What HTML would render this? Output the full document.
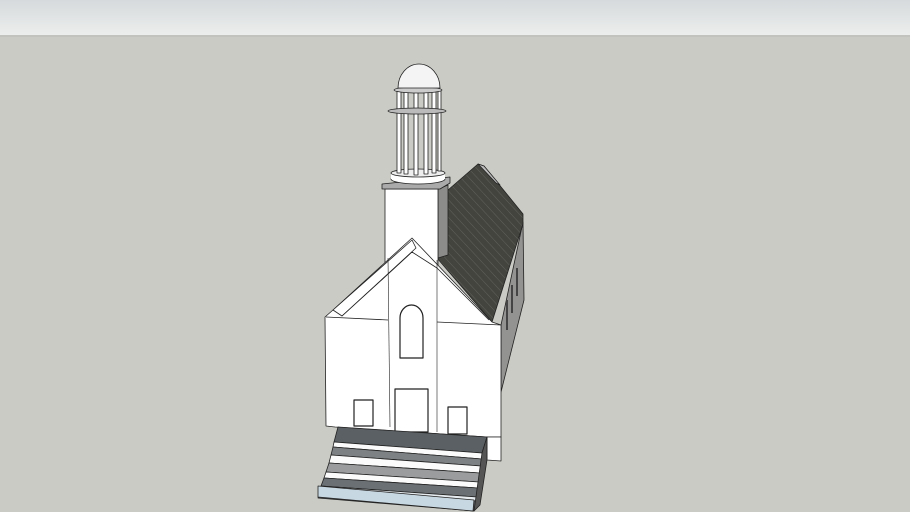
<!DOCTYPE html>
<html><head><meta charset="utf-8"><style>
html,body{margin:0;padding:0;width:910px;height:512px;overflow:hidden;background:#cbcbc6}
</style></head><body>
<svg width="910" height="512" viewBox="0 0 910 512" xmlns="http://www.w3.org/2000/svg">
<defs><linearGradient id="sky" x1="0" y1="0" x2="0" y2="1"><stop offset="0" stop-color="#d6dadc"/><stop offset="1" stop-color="#eceeed"/></linearGradient>
<pattern id="tile" width="6" height="6" patternUnits="userSpaceOnUse" patternTransform="rotate(47)"><rect width="6" height="6" fill="#44443f"/><line x1="0" y1="0" x2="6" y2="0" stroke="#62625c" stroke-width="1"/></pattern></defs>
<rect x="0" y="0" width="910" height="35" fill="url(#sky)"/>
<rect x="0" y="35" width="910" height="2" fill="#c2c2bf"/>
<rect x="0" y="37" width="910" height="475" fill="#cbcbc6"/>
<g stroke="#222" stroke-width="0.8" stroke-linejoin="round">
<polygon points="501,325 523,222 524,300 501,392" fill="#939391"/>
<g fill="#444" stroke="none"><rect x="506" y="300" width="2" height="30"/><rect x="511" y="285" width="2" height="28"/><rect x="516" y="268" width="2" height="28"/></g>
<polygon points="478,164 484,166 523,214 523,224 492,322 437,258 448,190" fill="url(#tile)"/>
<polygon points="478,164 484,166 500,185 496,183" fill="#bbb"/>
<polygon points="438,189 448,185 448,255 438,258" fill="#8c8c8a"/>
<rect x="385" y="189" width="53" height="80" fill="#fff"/>
<polygon points="382,184 450,177 450,183 440,189 382,189" fill="#aaa"/>
<ellipse cx="418" cy="179" rx="27" ry="5" fill="#fff"/>
<rect x="391" y="173" width="54" height="6" fill="#fff" stroke="none"/>
<ellipse cx="418" cy="173" rx="27" ry="4" fill="#eee"/>
<g fill="#fff"><rect x="397" y="91" width="4" height="82"/><rect x="404" y="92" width="4" height="82"/><rect x="414" y="92" width="4" height="83"/><rect x="424" y="92" width="4" height="82"/><rect x="432" y="91" width="4" height="82"/><rect x="438" y="91" width="3" height="80"/></g>
<ellipse cx="417" cy="111" rx="29" ry="3" fill="#bbb"/>
<ellipse cx="418" cy="90" rx="24" ry="3" fill="#ccc"/>
<path d="M398,88 A21,24 0 0 1 440,88 Z" fill="#f4f4f4"/>
<polygon points="325,317 333,310 412,238 492,322 501,325 501,437 487,437 335,427 326,426" fill="#fff"/>
<polygon points="487,437 501,437 501,461 487,460" fill="#fff"/>
<polygon points="333,310 412,240 416,248 342,316" fill="#fff"/>
<polyline points="342,316 386,276 412,252 437,268 489,320" fill="none"/>
<line x1="326" y1="317" x2="388" y2="320"/>
<line x1="437" y1="322" x2="501" y2="325"/>
<line x1="388" y1="258" x2="390" y2="427" stroke-width="0.6"/>
<line x1="437" y1="260" x2="437" y2="432" stroke-width="0.6"/>
<path d="M400,358 L400,318 A11.5,13 0 0 1 423,318 L423,358 Z" fill="#fff" stroke-width="1.2"/>
<rect x="395" y="389" width="33" height="43" fill="#fff" stroke-width="1.2"/>
<rect x="354" y="400" width="19" height="26" fill="#fff" stroke-width="1.2"/>
<rect x="448" y="407" width="19" height="27" fill="#fff" stroke-width="1.2"/>
<polygon points="338,427 487,437 482,453 334,442" fill="#5b6064"/>
<polygon points="334,442 482,453 482,459 333,447" fill="#fbfbfb"/>
<polygon points="333,447 482,459 481,466 331,455" fill="#7d8184"/>
<polygon points="331,455 481,466 480,473 329,463" fill="#fbfbfb"/>
<polygon points="329,463 480,473 479,482 326,472" fill="#9a9c9d"/>
<polygon points="326,472 479,482 478,488 324,478" fill="#fbfbfb"/>
<polygon points="324,478 478,488 477,497 321,486" fill="#6b7074"/>
<polygon points="321,486 477,497 476,501 320,490" fill="#e6ecef"/>
<polygon points="320,490 476,501 474,511 318,498" fill="#5d6266"/>
<polygon points="318,486 474,500 473,511 318,497" fill="#c8d8e2"/>
<polygon points="487,437 482,453 474,511 480,505 487,460" fill="#555"/>
</g>
</svg>
</body></html>
